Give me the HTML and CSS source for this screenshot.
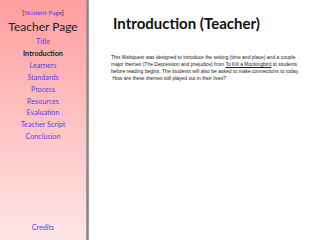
FILE: index.html
```html
<!DOCTYPE html>
<html lang="en">
<head>
    <meta charset="UTF-8">
    <title>Introduction (Teacher)</title>
    <link rel="stylesheet" href="styles.css">
</head>
<body>
    <div class="page">
        <div class="sidebar">
            <div class="switch">[<a href="#">Student Page</a>]</div>
            <div class="heading">Teacher Page</div>
            <ul class="nav">
                <li><a href="#">Title</a></li>
                <li class="current">Introduction</li>
                <li><a href="#">Learners</a></li>
                <li><a href="#">Standards</a></li>
                <li><a href="#">Process</a></li>
                <li><a href="#">Resources</a></li>
                <li><a href="#">Evaluation</a></li>
                <li><a href="#">Teacher Script</a></li>
                <li><a href="#">Conclusion</a></li>
            </ul>
            <div class="credits"><a href="#">Credits</a></div>
        </div>
        <div class="edge"></div>
        <div class="content">
            <h1>Introduction (Teacher)</h1>
            <p>This Webquest was designed to introduce the setting (time and place) and a couple major themes (The Depression and prejudice) from <u>To Kill a Mockingbird</u> to students before reading begins. The students will also be asked to make connections to today.<br>&nbsp;How are these themes still played out in their lives?</p>
        </div>
    </div>
</body>
</html>
```

FILE: styles.css
```css
body {
    margin: 0;
    font-family: Lato, "Open Sans", sans-serif;
}
.page {
    display: flex;
    width: 320px;
    height: 240px;
}
.sidebar {
    width: 86px;
    display: flex;
    flex-direction: column;
    align-items: center;
    text-align: center;
    background: linear-gradient(#ff9e9e, #ffe6e6);
    color: #222;
}
.sidebar a {
    color: #5b3df0;
    text-decoration: none;
}
.switch {
    font-size: 6.5px;
    margin-top: 8px;
    line-height: 9px;
}
.heading {
    font-size: 12px;
    line-height: 14px;
    margin-top: 3px;
}
.nav {
    list-style: none;
    margin: 2px 0 0;
    padding: 0;
}
.nav li {
    font-size: 7.2px;
    line-height: 11.9px;
}
.nav .current {
    font-weight: bold;
    color: #222;
}
.credits {
    margin-top: auto;
    margin-bottom: 6px;
    font-size: 7.2px;
    line-height: 12px;
}
.edge {
    width: 3px;
    background: linear-gradient(to right, #b0a0a0, #888, #aaa);
}
.content {
    flex: 1;
    padding: 14px 0 0 24px;
}
h1 {
    margin: 0;
    font-size: 15px;
    line-height: 18px;
    color: #111;
}
p {
    margin: 22px 0 0 -2px;
    font-family: "Liberation Sans", Arial, sans-serif;
    font-size: 5px;
    line-height: 7px;
    color: #222;
    width: 190px;
}
```
